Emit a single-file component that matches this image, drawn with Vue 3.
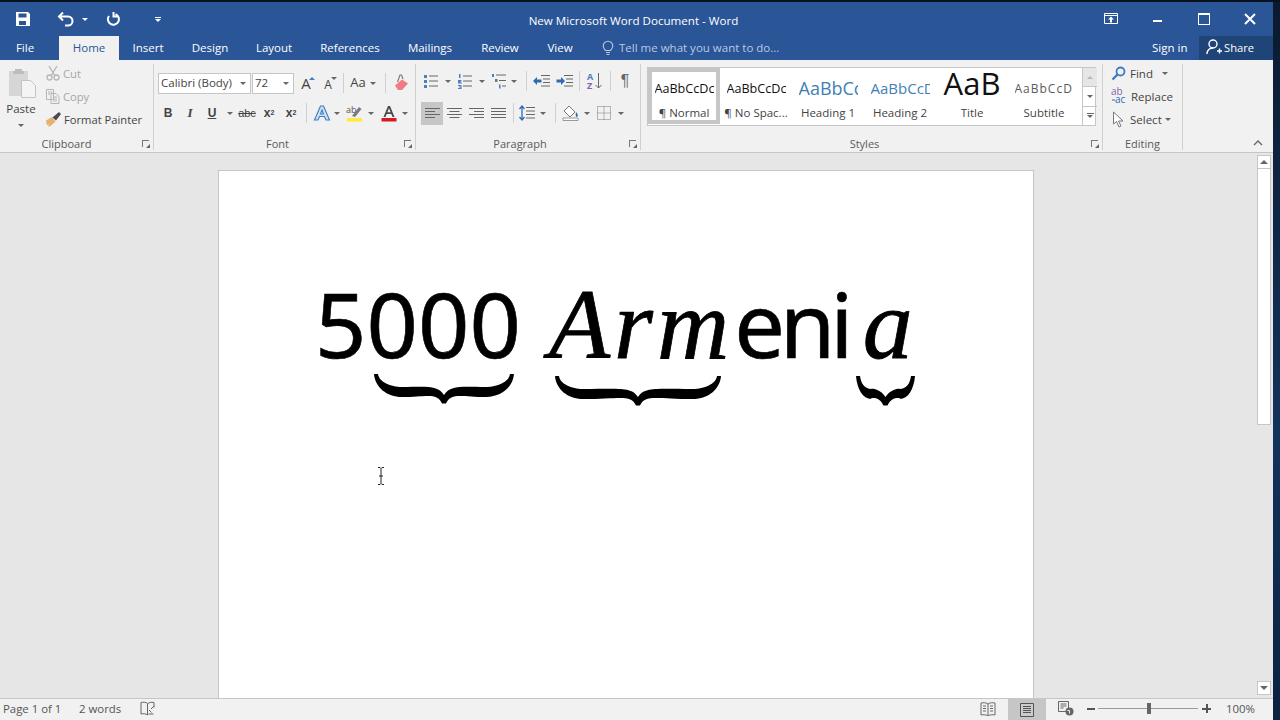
<template>
  <div class="screen">
    <div class="top-edge"></div>
    <div class="body-row">
      <div class="window">
        <!-- title bar -->
        <header class="titlebar">
          <div class="qat">
            <svg class="q-save" width="16" height="16" viewBox="0 0 16 16"><path d="M1 1h12l2 2v12H1z M3.500 2.500v4h8v-4z M4 10v4h7v-4z" fill="#fff" fill-rule="evenodd"/></svg>
            <svg class="q-undo" width="18" height="16" viewBox="0 0 18 16"><path d="M6 1.500L2 5.500l4 4M2.500 5.500H11a4.500 4.500 0 0 1 0 9H8" fill="none" stroke="#fff" stroke-width="2"/></svg>
            <i class="caret white q-c1"></i>
            <svg class="q-redo" width="14" height="16" viewBox="0 0 14 16"><path d="M9.500 3.200A5.500 5.500 0 1 1 3 5M7.500 1v4.500H12" fill="none" stroke="#fff" stroke-width="2"/></svg>
            <span class="q-custom"><b></b><i class="caret white"></i></span>
          </div>
          <div class="doc-title">New Microsoft Word Document - Word</div>
          <div class="winbtns">
            <svg class="w-opt" width="14" height="12" viewBox="0 0 14 12"><path d="M.5.500h13v10H.5zM.5 2.500h13" fill="none" stroke="#fff"/><path d="M7 3.500l3 3H8v3H6v-3H4z" fill="#fff"/></svg>
            <span class="w-min"></span>
            <span class="w-max"></span>
            <svg class="w-close" width="12" height="12" viewBox="0 0 12 12"><path d="M1 1l10 10M11 1L1 11" stroke="#fff" stroke-width="2"/></svg>
          </div>
        </header>

        <!-- tabs -->
        <nav class="tabs">
          <span v-for="t in tabs" :key="t" class="tab" :class="['tab-' + t.toLowerCase(), { active: t === 'Home' }]">{{ t }}</span>
          <svg class="bulb" width="12" height="16" viewBox="0 0 12 16"><path d="M3.500 10.500C2 9 1.200 8 1.200 6a4.800 4.800 0 0 1 9.600 0c0 2-.8 3-2.300 4.500zM4 12.500h4M4.500 14.500h3" fill="none" stroke="#b9c9e2" stroke-width="1.100"/></svg>
          <span class="tellme">Tell me what you want to do...</span>
          <span class="signin">Sign in</span>
          <span class="share">
            <svg width="16" height="16" viewBox="0 0 16 16"><circle cx="7" cy="5" r="4" fill="none" stroke="#fff" stroke-width="1.400"/><path d="M.8 15c.5-3.500 2.500-6 6.200-6M11 12h5M13.500 9.500v5" fill="none" stroke="#fff" stroke-width="1.400"/></svg>
            Share
          </span>
        </nav>

        <!-- ribbon -->
        <section class="ribbon">
          <div class="group g-clip">
            <div class="clip-body">
              <div class="paste">
                <svg width="28" height="30" viewBox="0 0 28 30"><path d="M0 3h19v25H0z" fill="#d6d6d6"/><path d="M6 1h7v2h2v3H4V3h2z" fill="#bdbdbd"/><path d="M12.500 12.500h9l5 5v12h-14z" fill="#f4f4f4" stroke="#c4c4c4"/></svg>
                <span class="paste-lbl">Paste</span>
                <i class="caret"></i>
              </div>
              <div class="clip-list">
                <div class="clip-row off">
                  <svg width="16" height="16" viewBox="0 0 16 16"><path d="M4 1l5.500 9M12 1L6.500 10" stroke="#b5b5b5" stroke-width="1.300" fill="none"/><circle cx="4.500" cy="12.500" r="2.500" fill="none" stroke="#b5b5b5" stroke-width="1.300"/><circle cx="11.500" cy="12.500" r="2.500" fill="none" stroke="#b5b5b5" stroke-width="1.300"/></svg>
                  Cut
                </div>
                <div class="clip-row off">
                  <svg width="16" height="16" viewBox="0 0 16 16"><path d="M1.500 1.500h7v10h-7zM6 5.500h5l3 3v7H6z" fill="#f1f1f1" stroke="#b5b5b5"/><path d="M3 4h4M3 6h2M8 9h4M8 11h4M8 13h4" stroke="#b5b5b5"/></svg>
                  Copy
                </div>
                <div class="clip-row">
                  <svg width="17" height="16" viewBox="0 0 17 16"><path d="M1 9.500L7 6l3.500 4.500L5 15.500H3L4 13l-2 1.500z" fill="#e3b36f"/><path d="M7.500 6.500L14 1l2 2-5 6.500z" fill="#4a4a4a"/></svg>
                  Format Painter
                </div>
              </div>
            </div>
            <div class="glabel">Clipboard<i class="launch"></i></div>
          </div>

          <div class="group g-font">
            <div class="rows">
              <div class="row">
                <div class="combo c-font">Calibri (Body)<i class="caret"></i></div>
                <div class="combo c-size">72<i class="caret"></i></div>
                <span class="btn ml2"><span class="bigA">A</span><i class="up-mark"></i></span>
                <span class="btn"><span class="smA">A</span><i class="down-mark"></i></span>
                <i class="vsep ml3"></i>
                <span class="btn ml3 case">Aa</span>
                <span class="drop w8"><i class="caret"></i></span>
                <i class="vsep ml8"></i>
                <span class="btn ml4">
                  <svg width="18" height="18" viewBox="0 0 18 18"><path d="M3 11.500l7-6 6 4-6 6.500H6z" fill="#ee7d85"/><path d="M5.500 8L8 1h1.500l1.500 4" fill="none" stroke="#7d7d7d" stroke-width="1.200"/></svg>
                </span>
              </div>
              <div class="row row-b">
                <span class="btn fmt strong">B</span>
                <span class="btn fmt ital">I</span>
                <span class="btn fmt underline">U</span>
                <span class="drop w13"><i class="caret"></i></span>
                <span class="btn fmt strike">abc</span>
                <span class="btn fmt strong">x<sub>2</sub></span>
                <span class="btn fmt strong">x<sup>2</sup></span>
                <i class="vsep ml4"></i>
                <span class="btn ml4">
                  <svg width="18" height="18" viewBox="0 0 18 18"><path d="M1.500 16L7.500 2h3l6 14h-3.500L11.500 12.500h-5L5 16zM7.500 10h3L9 6z" fill="#cfe0f3" stroke="#3f7cc0" stroke-width="1.100"/></svg>
                </span>
                <span class="drop w8"><i class="caret"></i></span>
                <span class="btn ml3">
                  <svg width="18" height="18" viewBox="0 0 18 18"><text x="0" y="9" font-size="9" font-family="Open Sans, sans-serif" fill="#555">ab</text><path d="M6 12l7-9 2.500 2L9 13z" fill="#7a7a7a"/><path d="M1 14h15v3.500H1z" fill="#ffeb3b"/></svg>
                </span>
                <span class="drop w10"><i class="caret"></i></span>
                <span class="btn ml2">
                  <svg width="18" height="18" viewBox="0 0 18 18"><path d="M3.500 13L8 2h2l4.500 11h-2l-1.200-3H6.700L5.500 13zM7.400 8.300h3.200L9 4.200z" fill="#4a4a4a"/><path d="M1.500 14h15v3.500h-15z" fill="#d31a1f"/></svg>
                </span>
                <span class="drop w10"><i class="caret"></i></span>
              </div>
            </div>
            <div class="glabel">Font<i class="launch"></i></div>
          </div>

          <div class="group g-para">
            <div class="rows">
              <div class="row">
                <span class="btn ml4">
                  <svg width="16" height="16" viewBox="0 0 16 16"><path d="M6 3h9M6 8h9M6 13h9" stroke="#666"/><path d="M1 2h3v3H1zM1 7h3v3H1zM1 12h3v3H1z" fill="#4d7fb8"/></svg>
                </span>
                <span class="drop w12"><i class="caret"></i></span>
                <span class="btn">
                  <svg width="16" height="16" viewBox="0 0 16 16"><path d="M6 3h9M6 8h9M6 13h9" stroke="#666"/><path d="M2 1h1.500v4H2zM1 7h3.500v1L3 9.500h2v1H1zM1 12h3.500v4H1v-1h2.500v-.5H2v-1h1.500V13H1z" fill="#4d7fb8"/></svg>
                </span>
                <span class="drop w12"><i class="caret"></i></span>
                <span class="btn">
                  <svg width="16" height="16" viewBox="0 0 16 16"><path d="M5 2h10M8 7.500h7M11 13h4" stroke="#666"/><path d="M1 1h2v3H1z" fill="#4d7fb8"/><path d="M4 6h2.500v3H4z" fill="#777"/><path d="M8 11.500h1.500v4H8z" fill="#4d7fb8"/></svg>
                </span>
                <span class="drop w8"><i class="caret"></i></span>
                <i class="vsep ml8"></i>
                <span class="btn ml3">
                  <svg width="17" height="14" viewBox="0 0 17 14"><path d="M8 1.500h9M10 5h7M10 8.500h7M8 12h9" stroke="#666"/><path d="M0 7l4-4v2.500h4.500v3H4V11z" fill="#2f6db0"/></svg>
                </span>
                <span class="btn ml1">
                  <svg width="17" height="14" viewBox="0 0 17 14"><path d="M8 1.500h9M10 5h7M10 8.500h7M8 12h9" stroke="#666"/><path d="M9 7L5 3v2.500H.5v3H5V11z" fill="#2f6db0"/></svg>
                </span>
                <i class="vsep ml4"></i>
                <span class="btn ml4">
                  <svg width="16" height="18" viewBox="0 0 16 18"><text x="0" y="8" font-size="9" font-family="Open Sans, sans-serif" font-weight="700" fill="#4d7fb8">A</text><text x="0" y="17" font-size="9" font-family="Open Sans, sans-serif" font-weight="700" fill="#8a63a8">Z</text><path d="M11.500 1v15M8.500 13l3 3 3-3" fill="none" stroke="#666"/></svg>
                </span>
                <i class="vsep ml4"></i>
                <span class="btn ml3 pilcrow">¶</span>
              </div>
              <div class="row row-p">
                <span class="btn on"><svg width="15" height="13" viewBox="0 0 15 13"><path d="M0 1.500h15M0 4.500h10M0 7.500h15M0 10.500h10" stroke="#666"/></svg></span>
                <span class="btn"><svg width="15" height="13" viewBox="0 0 15 13"><path d="M0 1.500h15M2.500 4.500h10M0 7.500h15M2.500 10.500h10" stroke="#666"/></svg></span>
                <span class="btn"><svg width="15" height="13" viewBox="0 0 15 13"><path d="M0 1.500h15M5 4.500h10M0 7.500h15M5 10.500h10" stroke="#666"/></svg></span>
                <span class="btn"><svg width="15" height="13" viewBox="0 0 15 13"><path d="M0 1.500h15M0 4.500h15M0 7.500h15M0 10.500h15" stroke="#666"/></svg></span>
                <i class="vsep ml4"></i>
                <span class="btn ml2"><svg width="16" height="16" viewBox="0 0 16 16"><path d="M7 2.500h9M7 6h9M7 9.500h9M7 13h9" stroke="#666"/><path d="M3 1v14M.5 4L3 1l2.500 3M.5 12L3 15l2.500-3" fill="none" stroke="#2f6db0" stroke-width="1.300"/></svg></span>
                <span class="drop w10"><i class="caret"></i></span>
                <i class="vsep ml7"></i>
                <span class="btn ml4"><svg width="18" height="16" viewBox="0 0 18 16"><path d="M7 1l6 6-5 5-6-6z" fill="#fff" stroke="#777"/><path d="M14 7c1.500 2 2.500 3 1.500 4.500S13 11 14 7z" fill="#2f6db0"/><path d="M1 13h15v2.500H1z" fill="#fff" stroke="#999"/></svg></span>
                <span class="drop w10"><i class="caret"></i></span>
                <span class="btn ml1"><svg width="14" height="14" viewBox="0 0 14 14"><path d="M.5.500h13v13H.5zM7 .500v13M.5 7h13" fill="none" stroke="#777" stroke-dasharray="1 1"/></svg></span>
                <span class="drop w12"><i class="caret"></i></span>
              </div>
            </div>
            <div class="glabel">Paragraph<i class="launch"></i></div>
          </div>

          <div class="group g-styles">
            <div class="gallery">
              <div v-for="s in styles" :key="s.label" class="style-item" :class="[s.cls, { picked: s.cls === 'st-normal' }]">
                <span class="st-prev">{{ s.prev }}</span>
                <span class="st-label">{{ s.label }}</span>
              </div>
              <div class="gal-scroll">
                <span class="up-off"><i class="caret flip"></i></span>
                <span><i class="caret"></i></span>
                <span class="more"><b></b><i class="caret"></i></span>
              </div>
            </div>
            <div class="glabel">Styles<i class="launch"></i></div>
          </div>

          <div class="group g-edit">
            <div class="edit-list">
              <div class="edit-row">
                <svg width="15" height="15" viewBox="0 0 15 15"><circle cx="9.500" cy="5.500" r="4" fill="none" stroke="#3f7cc0" stroke-width="1.800"/><path d="M6.500 8.500L1.500 13.500" stroke="#3f7cc0" stroke-width="2.400"/></svg>
                <span>Find</span><i class="caret e-find"></i>
              </div>
              <div class="edit-row">
                <svg width="16" height="16" viewBox="0 0 16 16"><text x="0" y="7" font-size="10" font-family="Open Sans, sans-serif" fill="#8a63a8">ab</text><text x="4" y="15" font-size="10" font-family="Open Sans, sans-serif" fill="#2f6db0">ac</text><path d="M1 12h3" stroke="#2f6db0"/></svg>
                <span>Replace</span>
              </div>
              <div class="edit-row">
                <svg class="arrow" width="15" height="17" viewBox="0 0 15 17"><path d="M2.500 1v12l3-2.500L8 16l2-1-2.500-5H12z" fill="#fff" stroke="#777"/></svg>
                <span>Select</span><i class="caret e-sel"></i>
              </div>
            </div>
            <div class="glabel">Editing</div>
          </div>

          <svg class="collapse" width="10" height="6" viewBox="0 0 10 6"><path d="M1 5l4-4 4 4" fill="none" stroke="#666" stroke-width="1.400"/></svg>
        </section>

        <!-- document -->
        <main class="workspace">
          <div class="canvas">
            <div class="page">
              <div class="equation">
                <span class="up">5</span>
                <span class="under">
                  <span class="up">000</span>
                  <svg class="brace" :width="140" height="30" viewBox="0 0 140 30"><path :d="bracePath(140)"/></svg>
                </span>
                <span class="under arm">
                  <span class="it">Arm</span>
                  <svg class="brace brace-arm" :width="166" height="30" viewBox="0 0 166 30"><path :d="bracePath(166)"/></svg>
                </span>
                <span class="up eni">eni</span>
                <span class="under last">
                  <span class="it">a</span>
                  <svg class="brace brace-a" :width="59" height="30" viewBox="0 0 59 30"><path :d="bracePath(59)"/></svg>
                </span>
              </div>
            </div>
            <svg class="ibeam" width="8" height="18" viewBox="0 0 8 18"><path d="M1 .500h2l1 1 1-1h2M4 1.500v15M1 17.500h2l1-1 1 1h2M2 9h4" fill="none" stroke="#222"/></svg>
          </div>
          <aside class="vscroll">
            <span class="sb-btn"><i class="caret flip"></i></span>
            <span class="sb-thumb"></span>
            <span class="sb-track"></span>
            <span class="sb-btn"><i class="caret"></i></span>
          </aside>
        </main>

        <!-- status bar -->
        <footer class="status">
          <span class="st-page">Page 1 of 1</span>
          <span class="st-words">2 words</span>
          <svg width="16" height="15" viewBox="0 0 16 15"><path d="M7.500 2.500C6 1 3 1 1 1.500V13c2-.5 5-.5 6.500 1M7.500 2.500V14M8 2.500c1-1 3-1.500 6-1v5M9 9l2.500 2.500M8.500 13h5M11 8l3-3" fill="none" stroke="#666"/></svg>
          <span class="st-fill"></span>
          <svg class="v-read" width="16" height="14" viewBox="0 0 16 14"><path d="M8 2C6 .5 3 .5 1 1v12c2-.5 5-.5 7 1 2-1.500 5-1.500 7-1V1c-2-.5-5-.5-7 1zM8 2v12M3 4h3M3 6.500h3M3 9h3M10 4h3M10 6.500h3M10 9h3" fill="none" stroke="#666"/></svg>
          <span class="v-print"><svg width="14" height="14" viewBox="0 0 14 14"><path d="M.5.500h13v13H.5zM3 3.500h8M3 5.500h8M3 7.500h8M3 9.500h8" fill="#ccc" stroke="#555"/></svg></span>
          <svg class="v-web" width="16" height="15" viewBox="0 0 16 15"><path d="M.5.500h10v10H.5zM2.500 3h6M2.500 5h6M2.500 7h3" fill="none" stroke="#666"/><circle cx="11.500" cy="10.500" r="4" fill="#666"/><path d="M9.500 9.500h2v3" stroke="#eee" fill="none"/></svg>
          <span class="z-minus"></span>
          <span class="slider"><b></b></span>
          <span class="z-plus"></span>
          <span class="z-pct">100%</span>
        </footer>
      </div>
      <div class="right-edge"></div>
    </div>
  </div>
</template>

<script setup>
const tabs = ['File', 'Home', 'Insert', 'Design', 'Layout', 'References', 'Mailings', 'Review', 'View']

const styles = [
  { label: '¶ Normal', prev: 'AaBbCcDc', cls: 'st-normal' },
  { label: '¶ No Spac...', prev: 'AaBbCcDc', cls: 'st-nospace' },
  { label: 'Heading 1', prev: 'AaBbCc', cls: 'st-h1' },
  { label: 'Heading 2', prev: 'AaBbCcD', cls: 'st-h2' },
  { label: 'Title', prev: 'AaB', cls: 'st-title' },
  { label: 'Subtitle', prev: 'AaBbCcD', cls: 'st-sub' }
]

// underbrace outline, hooks shrink on narrow braces
function bracePath(w) {
  const m = w / 2
  const h = Math.min(28, w * 0.26)
  return [
    'M0 0',
    `C1 13 ${h * 0.45} 23 ${h} 23`,
    `C${m - 18} 23 ${m - 7} 18 ${m - 2} 29.500`,
    `L${m + 2} 29.500`,
    `C${m + 7} 18 ${m + 18} 23 ${w - h} 23`,
    `C${w - h * 0.45} 23 ${w - 1} 13 ${w} 0`,
    `L${w - 4} 0`,
    `C${w - 5} 8 ${w - h * 0.6} 13 ${w - h} 13`,
    `C${m + 16} 13 ${m + 7} 11 ${m} 21`,
    `C${m - 7} 11 ${m - 16} 13 ${h} 13`,
    `C${h * 0.6} 13 5 8 4 0`,
    'Z'
  ].join(' ')
}
</script>

<style>
html, body { margin: 0; overflow: hidden; background: #0d1b2e; }
</style>

<style scoped>
.screen {
  width: 1280px;
  height: 720px;
  display: flex;
  flex-direction: column;
  overflow: hidden;
  font-family: "Open Sans", "Noto Sans", sans-serif;
  font-size: 11.5px;
  color: #444;
}
.top-edge { height: 2px; background: #08121f; flex: none; }
.body-row { flex: 1; display: flex; min-height: 0; }
.window { width: 1273px; display: flex; flex-direction: column; }
.right-edge { flex: 1; background: linear-gradient(#0b1a2e, #12335c 60%, #0b2140); }

/* title bar */
.titlebar {
  height: 34px;
  background: #2a5597;
  display: flex;
  align-items: center;
  color: #fff;
  flex: none;
}
.qat { width: 400px; display: flex; align-items: center; padding-left: 15px; box-sizing: border-box; }
.q-undo { margin-left: 26px; }
.q-c1 { margin-left: 7px; }
.q-redo { margin-left: 18px; }
.q-custom { margin-left: 35px; display: flex; flex-direction: column; align-items: center; gap: 1px; }
.q-custom b { width: 6px; height: 1px; background: #fff; }
.doc-title { width: 467px; text-align: center; font-size: 11.6px; padding-top: 2px; }
.winbtns { flex: 1; display: flex; align-items: center; }
.w-opt { margin-left: 237px; }
.w-min { width: 9px; height: 2px; background: #fff; margin-left: 35px; margin-top: 3px; }
.w-max { width: 10px; height: 9px; border: 1px solid #fff; border-top-width: 2px; margin-left: 36px; }
.w-close { margin-left: 34px; }

/* tabs */
.tabs {
  height: 24px;
  background: #2a5597;
  display: flex;
  align-items: center;
  color: #fff;
  flex: none;
}
.tab { height: 24px; line-height: 23px; text-align: center; font-size: 11.5px; }
.tab-file { width: 50px; margin-right: 9px; }
.tab-home { width: 60px; }
.tab-insert { width: 58px; }
.tab-design { width: 66px; }
.tab-layout { width: 62px; }
.tab-references { width: 90px; }
.tab-mailings { width: 70px; }
.tab-review { width: 70px; }
.tab-view { width: 50px; }
.tab.active { background: #f1f1f1; color: #2a5597; }
.bulb { margin-left: 17px; }
.tellme { color: #b9c9e2; margin: 0 0 2px 5px; width: 533px; font-size: 11.5px; }
.signin { width: 47px; margin-bottom: 2px; }
.share {
  width: 74px;
  height: 24px;
  background: #1f4477;
  display: flex;
  align-items: center;
  gap: 2px;
  padding: 0 0 2px 7px;
  box-sizing: border-box;
  margin-left: auto;
  font-size: 11.2px;
}

/* ribbon */
.ribbon {
  height: 93px;
  background: #f1f1f1;
  border-bottom: 1px solid #c6c6c6;
  box-sizing: border-box;
  display: flex;
  flex: none;
  position: relative;
}
.group {
  height: 86px;
  margin-top: 4px;
  border-right: 1px solid #d0d0d0;
  box-sizing: border-box;
  display: flex;
  flex-direction: column;
  justify-content: space-between;
}
.g-clip { width: 154px; }
.g-font { width: 262px; }
.g-para { width: 225px; }
.g-styles { width: 462px; }
.g-edit { width: 80px; }
.glabel {
  height: 16px;
  line-height: 16px;
  text-align: center;
  position: relative;
  color: #5a5a5a;
  font-size: 11px;
  margin-bottom: -2px;
}
.g-clip .glabel { padding-right: 20px; }
.g-font .glabel { padding-right: 14px; }
.g-para .glabel { padding-right: 16px; }
.g-styles .glabel { padding-right: 14px; }
.launch {
  position: absolute;
  right: 4px;
  top: 4px;
  width: 6px;
  height: 6px;
  border-left: 1px solid #777;
  border-top: 1px solid #777;
}
.launch::after {
  content: "";
  position: absolute;
  right: -1px;
  bottom: -1px;
  border: 2px solid #666;
  border-left-color: transparent;
  border-top-color: transparent;
}
.caret {
  display: inline-block;
  width: 0;
  height: 0;
  border-left: 3px solid transparent;
  border-right: 3px solid transparent;
  border-top: 3px solid #666;
}
.caret.white { border-top-color: #fff; }
.caret.flip { border-top: 0; border-bottom: 3px solid #666; }

.clip-body { display: flex; padding-top: 4px; }
.paste { width: 42px; display: flex; flex-direction: column; align-items: center; }
.paste svg { margin-left: 4px; }
.paste-lbl { margin-top: 3px; line-height: 16px; }
.paste .caret { margin-top: 7px; margin-right: 1px; }
.clip-list { display: flex; flex-direction: column; gap: 1px; margin-left: 3px; margin-top: -6px; }
.clip-row { height: 22px; display: flex; align-items: center; gap: 2px; white-space: nowrap; font-size: 11.2px; }
.clip-row.off { color: #a6a6a6; }

.rows { padding-top: 8px; display: flex; flex-direction: column; gap: 8px; }
.row { display: flex; align-items: center; height: 22px; }
.g-font .row { padding-left: 4px; }
.g-font .row-b { padding-left: 3px; }
.g-para .rows { padding-top: 6px; gap: 10px; }
.g-para .row { padding-left: 0; }
.g-para .row-p { padding-left: 5px; }
.btn {
  width: 22px;
  height: 22px;
  display: flex;
  align-items: center;
  justify-content: center;
  flex: none;
  position: relative;
  color: #444;
}
.btn svg, .edit-row svg { overflow: visible; }
.btn.on { background: #c6c6c6; height: 23px; }
.drop { display: flex; align-items: center; justify-content: center; height: 22px; flex: none; }
.w8 { width: 8px; }
.w10 { width: 10px; }
.w12 { width: 12px; }
.w13 { width: 13px; }
.ml1 { margin-left: 1px; }
.ml2 { margin-left: 2px; }
.ml3 { margin-left: 3px; }
.ml4 { margin-left: 4px; }
.ml7 { margin-left: 7px; }
.ml8 { margin-left: 8px; }
.vsep { width: 1px; height: 20px; background: #d0d0d0; flex: none; }
.combo {
  height: 21px;
  background: #fff;
  border: 1px solid #c6c6c6;
  box-sizing: border-box;
  display: flex;
  align-items: center;
  justify-content: space-between;
  padding: 0 4px 2px 2px;
  font-size: 11.5px;
}
.combo .caret { margin-top: 2px; }
.c-font { width: 93px; margin-right: 1px; white-space: nowrap; }
.c-size { width: 42px; }
.bigA { font-size: 15px; line-height: 1; margin-top: 1px; margin-left: -2px; }
.smA { font-size: 12px; line-height: 1; margin-top: 4px; margin-left: -2px; }
.up-mark, .down-mark {
  position: absolute;
  right: 3px;
  top: 5px;
  border-left: 3px solid transparent;
  border-right: 3px solid transparent;
}
.up-mark { border-bottom: 3px solid #3f7cc0; }
.down-mark { border-top: 3px solid #666; }
.case { font-size: 13px; padding-bottom: 2px; }
.fmt { font-size: 12px; font-family: "Liberation Sans", sans-serif; }
.strong { font-weight: 700; }
.ital { font-style: italic; font-family: "Liberation Serif", serif; font-weight: 700; font-size: 13px; }
.underline { text-decoration: underline; font-weight: 700; }
.strike { text-decoration: line-through; font-size: 11px; }
.fmt sub, .fmt sup { font-size: 7px; line-height: 0; }
.pilcrow { font-size: 16px; color: #666; font-family: "Liberation Sans", sans-serif; }

/* styles gallery */
.gallery {
  margin: 3px 0 0 6px;
  height: 59px;
  width: 449px;
  background: #fff;
  border: 1px solid #c6c6c6;
  box-sizing: border-box;
  display: flex;
}
.style-item {
  width: 72px;
  height: 57px;
  box-sizing: border-box;
  display: flex;
  flex-direction: column;
  align-items: center;
  padding: 4px;
  overflow: hidden;
  flex: none;
}
.style-item.picked { border: 4px solid #c6c6c6; padding: 0; height: 56px; }
.st-prev {
  height: 33px;
  line-height: 33px;
  width: 59px;
  overflow: hidden;
  white-space: nowrap;
  font-size: 12.6px;
  color: #111;
  text-align: left;
  flex: none;
}
.st-label { font-size: 11.5px; color: #444; white-space: nowrap; line-height: 15px; }
.st-h1 .st-prev { font-size: 18px; color: #3f7fb5; }
.st-h2 .st-prev { font-size: 15px; color: #3f7fb5; }
.st-title .st-prev { font-size: 31px; color: #111; text-align: center; line-height: 22px; }
.st-sub .st-prev { font-size: 12px; color: #5a5a5a; letter-spacing: 1px; }
.gal-scroll {
  margin-left: 2px;
  width: 14px;
  display: flex;
  flex-direction: column;
  border-left: 1px solid #c6c6c6;
  flex: none;
}
.gal-scroll span {
  height: 19px;
  border-bottom: 1px solid #c6c6c6;
  display: flex;
  flex-direction: column;
  align-items: center;
  justify-content: center;
  gap: 1px;
}
.gal-scroll span:last-child { border-bottom: 0; }
.gal-scroll .up-off { background: #e6e6e6; }
.up-off .caret.flip { border-bottom-color: #b5b5b5; }
.more b { width: 7px; height: 1px; background: #666; }

/* editing */
.edit-list { display: flex; flex-direction: column; gap: 1px; padding: 0 0 0 8px; margin-top: -2px; }
.edit-row { height: 22px; display: flex; align-items: center; gap: 4px; white-space: nowrap; }
.edit-row svg { flex: none; }
.e-find { margin-left: 5px; }
.e-sel { margin-left: -1px; }
.collapse { position: absolute; right: 10px; top: 80px; }

/* document area */
.workspace { flex: 1; min-height: 0; display: flex; background: #e6e6e6; }
.canvas { flex: 1; padding: 17px 0 0 218px; position: relative; overflow: hidden; }
.page {
  width: 816px;
  height: 600px;
  box-sizing: border-box;
  background: #fff;
  border: 1px solid #c6c6c6;
  padding: 92px 0 0 96px;
}
.equation { display: flex; align-items: baseline; color: #000; line-height: 120px; white-space: nowrap; }
.up { font-family: "Noto Sans", sans-serif; font-size: 90px; -webkit-text-stroke: 0.6px #000; }
.it { font-family: "Liberation Serif", serif; font-style: italic; font-size: 100px; letter-spacing: 4px; -webkit-text-stroke: 0.8px #000; }
.under { display: inline-flex; flex-direction: column; align-items: center; }
.arm { margin-left: 28px; }
.eni { letter-spacing: -5.2px; margin-left: 1px; }
.last { margin-left: 8px; }
.brace { display: block; margin-top: -9px; flex: none; }
.brace-arm { margin-right: 6px; }
.brace-a { margin-right: 8px; }
.brace path { fill: #000; }
.ibeam { position: absolute; left: 377px; top: 314px; }

.vscroll {
  width: 16px;
  display: flex;
  flex-direction: column;
  padding-top: 2px;
  padding-bottom: 3px;
  box-sizing: border-box;
}
.sb-btn {
  height: 14px;
  width: 14px;
  background: #fff;
  border: 1px solid #c6c6c6;
  box-sizing: border-box;
  display: flex;
  align-items: center;
  justify-content: center;
  flex: none;
}
.sb-btn .caret { border-left-width: 4px; border-right-width: 4px; border-top-width: 4px; }
.sb-btn .caret.flip { border-bottom-width: 4px; border-top-width: 0; }
.sb-thumb { height: 256px; width: 14px; background: #fff; border: 1px solid #c6c6c6; border-top: 0; box-sizing: border-box; flex: none; }
.sb-track { flex: 1; }

/* status */
.status {
  height: 22px;
  background: #f1f1f1;
  border-top: 1px solid #c6c6c6;
  box-sizing: border-box;
  display: flex;
  align-items: center;
  flex: none;
  color: #555;
  font-size: 11.4px;
  padding-bottom: 2px;
}
.st-page { margin-left: 3px; width: 76px; }
.st-words { width: 61px; }
.st-fill { flex: 1; }
.v-print {
  width: 38px;
  height: 21px;
  background: #c6c6c6;
  display: flex;
  align-items: center;
  justify-content: center;
  margin: 0 0 -2px 12px;
  flex: none;
}
.v-web { margin-left: 12px; }
.z-minus { width: 8px; height: 2px; background: #555; margin-left: 13px; }
.slider { width: 100px; height: 1px; background: #999; margin-left: 3px; position: relative; }
.slider b { position: absolute; left: 49px; top: -5px; width: 4px; height: 11px; background: #666; }
.z-plus { width: 9px; height: 9px; margin-left: 4px; background: linear-gradient(#555, #555) center / 9px 2px no-repeat, linear-gradient(#555, #555) center / 2px 9px no-repeat; }
.z-pct { width: 62px; padding-left: 15px; box-sizing: border-box; }
</style>
